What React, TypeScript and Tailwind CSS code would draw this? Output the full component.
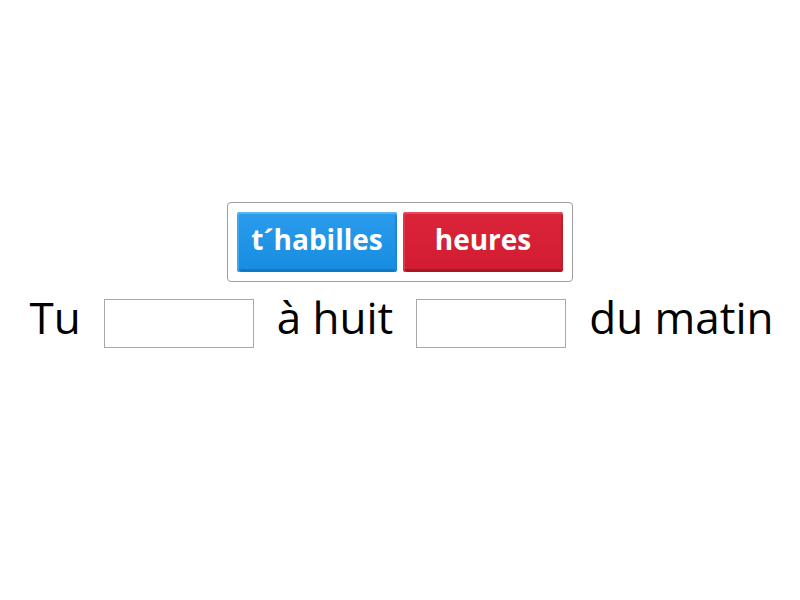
export default function App() {
  return (
    <div
      className="flex min-h-[600px] w-full flex-col items-center bg-white pt-[202px]"
      style={{ fontFamily: '"Open Sans", sans-serif' }}
    >
      <div className="flex gap-[6px] rounded-[4px] border border-[#9e9e9e] p-[9px]">
        <Tile label="t´habilles" color="blue" />
        <Tile label="heures" color="red" />
      </div>

      <div className="mt-[11px] flex h-[61px] items-center gap-[23px] pl-[3px] text-[44px] leading-none text-black">
        <span className="mb-[14px]">Tu</span>
        <Blank />
        <span className="mb-[14px]">à huit</span>
        <Blank />
        <span className="mb-[14px]">du matin</span>
      </div>
    </div>
  );
}

function Tile({ label, color }: { label: string; color: "blue" | "red" }) {
  const styles =
    color === "blue"
      ? "bg-gradient-to-b from-[#2a9cec] to-[#168ce0] shadow-[inset_0_2px_0_#5ab4f2,inset_2px_0_0_#3fa6ef,inset_-2px_0_0_#1a88d6,inset_0_-3px_0_#1277c4]"
      : "bg-gradient-to-b from-[#dc2439] to-[#d01c31] shadow-[inset_0_2px_0_#e54a5c,inset_2px_0_0_#df3649,inset_-2px_0_0_#c41a2e,inset_0_-3px_0_#aa1626]";
  return (
    <div
      className={`flex h-[60px] w-[160px] items-center justify-center rounded-[3px] pb-[7px] text-[28px] font-bold text-white ${styles}`}
    >
      {label}
    </div>
  );
}

function Blank() {
  return <div className="h-[49px] w-[150px] border border-[#a8a8a8] bg-white" />;
}
